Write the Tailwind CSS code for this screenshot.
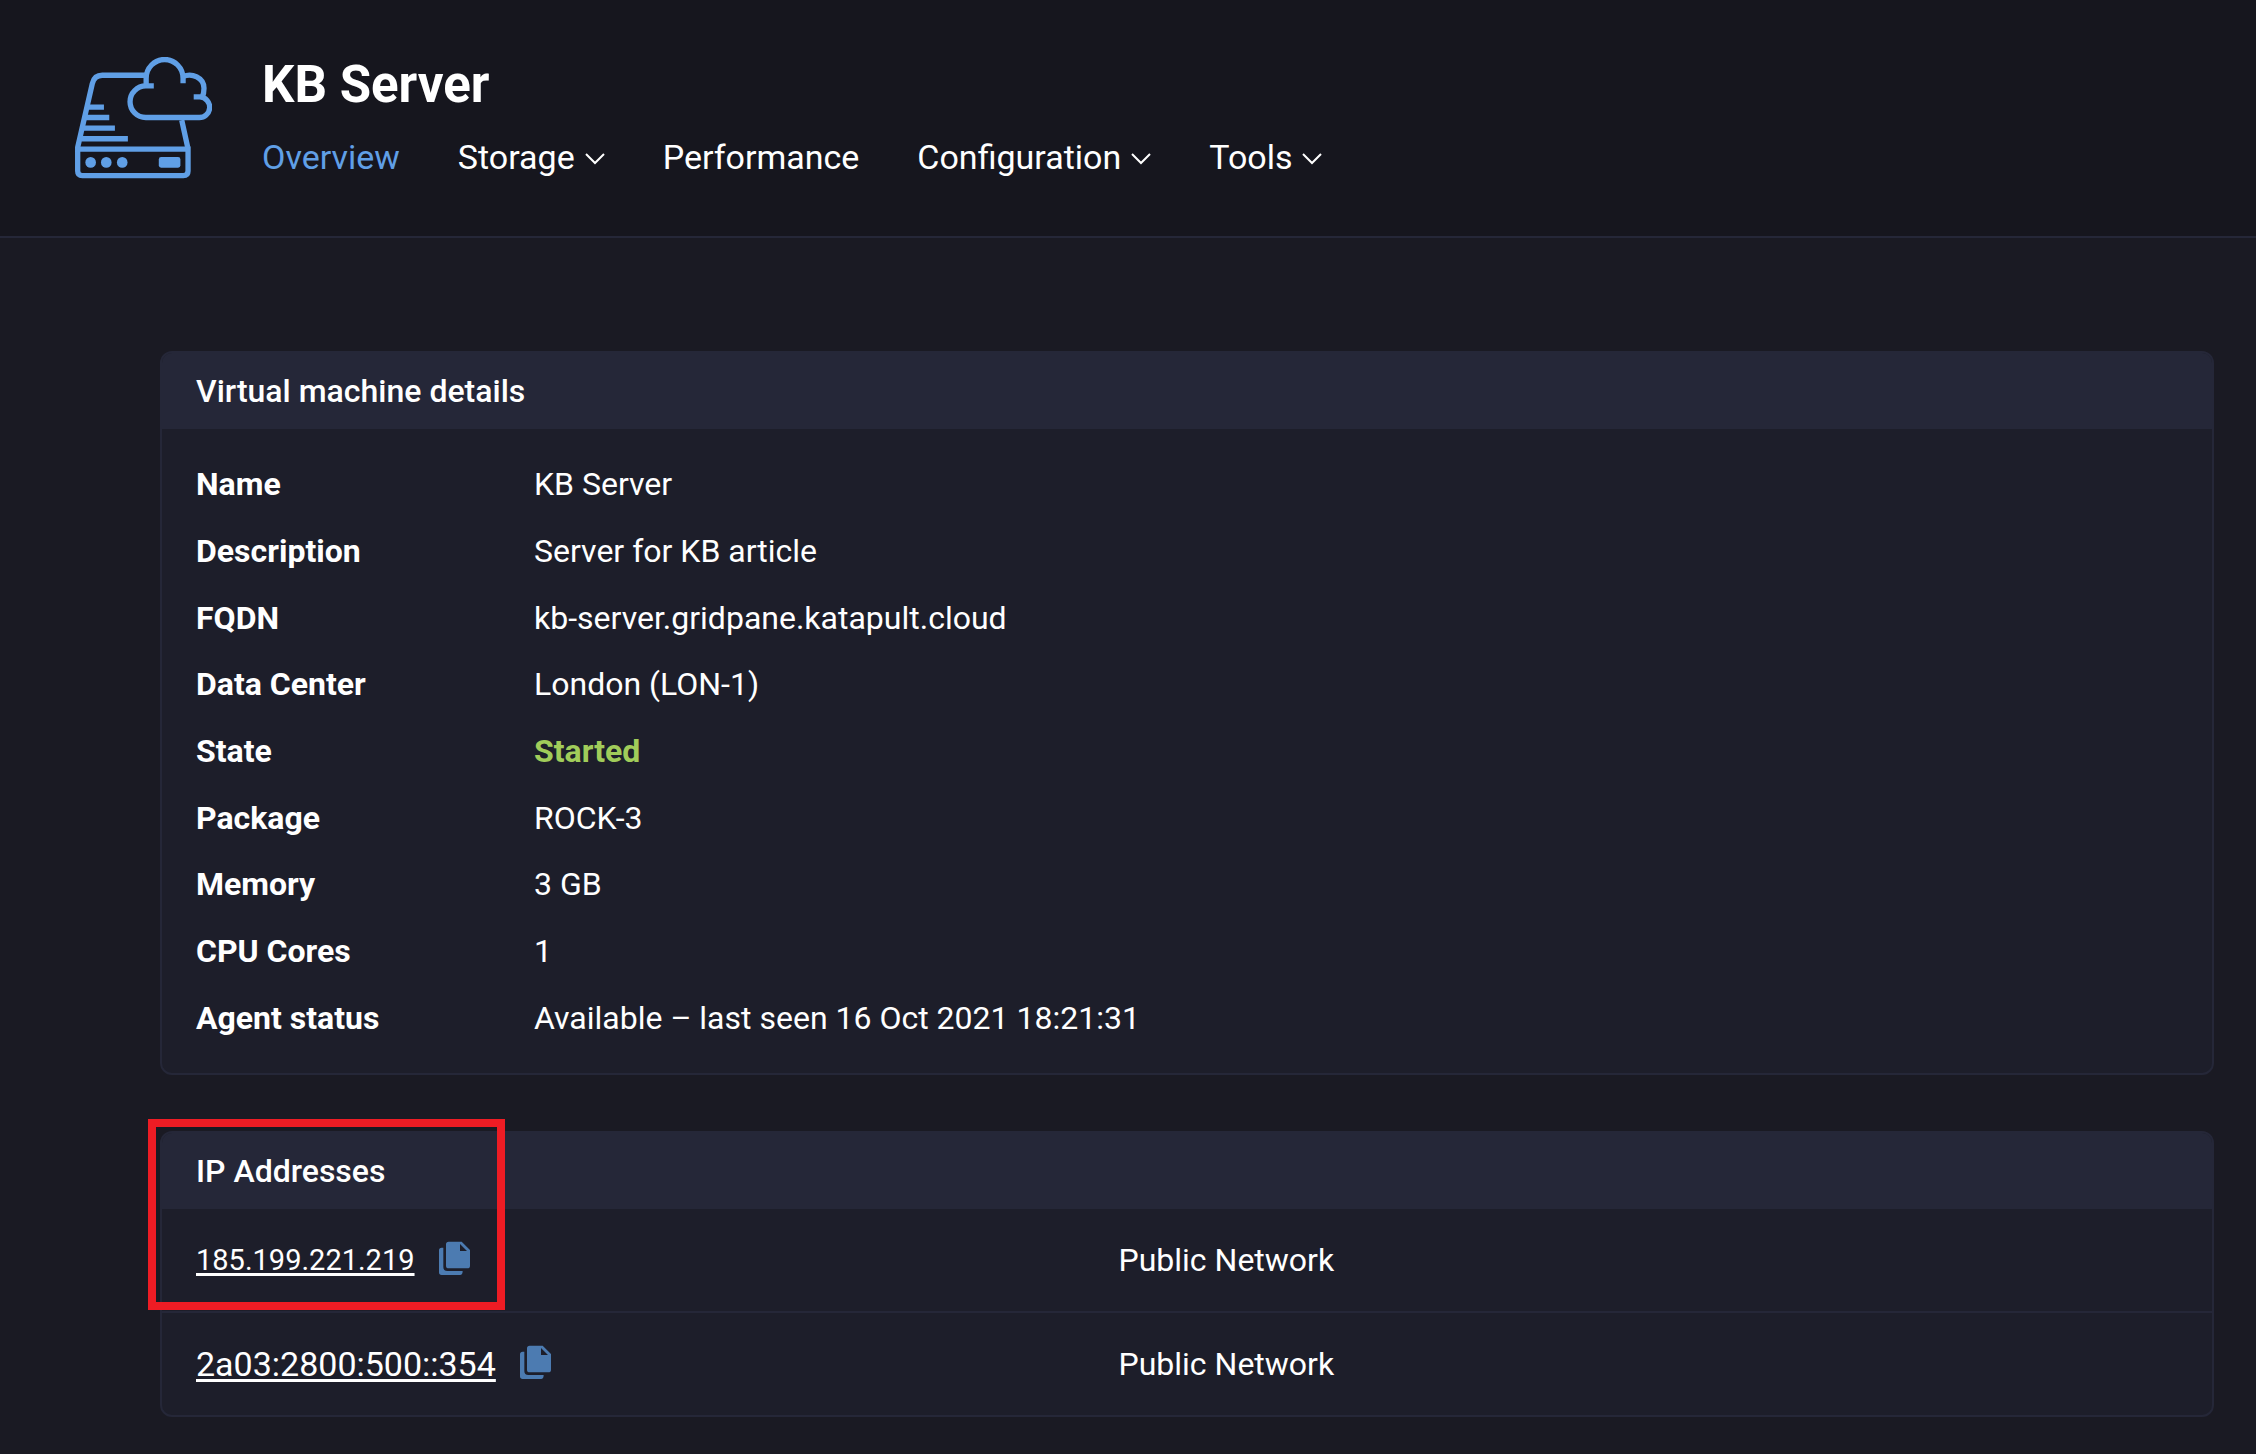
<!DOCTYPE html>
<html lang="en">
<head>
<meta charset="utf-8">
<meta name="viewport" content="width=device-width, initial-scale=1">
<title>KB Server</title>
<script src="https://cdn.jsdelivr.net/npm/@tailwindcss/browser@4"></script>
</head>
<body class="min-h-screen bg-[#1a1a23] font-['Roboto',sans-serif] text-[32px] leading-10 text-white">

<svg class="hidden" aria-hidden="true">
  <symbol id="chevron" viewBox="0 0 20 12"><path d="M1 1l9 9 9-9" fill="none" stroke="currentColor" stroke-width="2"/></symbol>
  <symbol id="copy" viewBox="0 0 93 102">
    <path fill="currentColor" d="M13 20H8Q0 20 0 28V94Q0 102 8 102H63Q71 102 71 90H25Q13 90 13 78Z"/>
    <path fill="currentColor" fill-rule="evenodd" d="M29 2H68L93 27V74Q93 82 85 82H29Q21 82 21 74V10Q21 2 29 2ZM63 9V30H84Z"/>
  </symbol>
</svg>

<header class="flex items-start gap-[50px] border-b-2 border-[#252738] bg-[#16161e] px-[75px] py-[57px]">
  <svg class="h-[122px] w-[137px] shrink-0 text-[#609fe6]" viewBox="45 50 412 367" fill="none" stroke="currentColor" stroke-width="16" aria-hidden="true">
    <path d="M260 105H127Q103 105 97 130L53 322M366 240L384 322"/>
    <path d="M53 327H385V393Q385 407 371 407H67Q53 407 53 393Z"/>
    <path d="M83 201H132M78 232H148M72 264H165M64 296H204"/>
    <path d="M282 137H258A47 47 0 0 0 258 232H417A31 31 0 0 0 421 170H402"/>
    <path d="M259 138V114A55 56 0 0 1 370 114V129M370 109C396 97 433 112 433 144Q433 160 428 170"/>
    <g fill="currentColor" stroke="none">
      <circle cx="92" cy="367" r="16"/><circle cx="139" cy="367" r="16"/><circle cx="187" cy="367" r="16"/>
      <rect x="297" y="351" width="65" height="32" rx="7"/>
    </g>
  </svg>
  <div class="flex flex-col gap-6">
    <h1 class="text-[51px] leading-14 font-bold">KB Server</h1>
    <nav class="flex flex-wrap gap-x-[58px] text-[34px]" aria-label="Server">
      <a href="#" class="text-[#609fe6]" aria-current="page">Overview</a>
      <button type="button" class="flex items-center gap-[10px]">Storage <svg class="mt-1 h-3 w-5" aria-hidden="true"><use href="#chevron"/></svg></button>
      <a href="#">Performance</a>
      <button type="button" class="flex items-center gap-[10px]">Configuration <svg class="mt-1 h-3 w-5" aria-hidden="true"><use href="#chevron"/></svg></button>
      <button type="button" class="flex items-center gap-[10px]">Tools <svg class="mt-1 h-3 w-5" aria-hidden="true"><use href="#chevron"/></svg></button>
    </nav>
  </div>
</header>

<main class="flex flex-col gap-14 pt-[113px] pr-[42px] pb-9 pl-40">
  <section class="overflow-hidden rounded-xl border-2 border-[#252738] bg-[#1d1e2a]">
    <h2 class="bg-[#252738] px-[34px] py-[18px] font-medium">Virtual machine details</h2>
    <dl class="my-[22px] grid min-h-[600px] auto-rows-fr grid-cols-[338px_1fr] items-center px-[34px]">
      <dt class="font-bold">Name</dt><dd>KB Server</dd>
      <dt class="font-bold">Description</dt><dd>Server for KB article</dd>
      <dt class="font-bold">FQDN</dt><dd>kb-server.gridpane.katapult.cloud</dd>
      <dt class="font-bold">Data Center</dt><dd>London (LON-1)</dd>
      <dt class="font-bold">State</dt><dd class="font-bold text-[#a1cc5a]">Started</dd>
      <dt class="font-bold">Package</dt><dd>ROCK-3</dd>
      <dt class="font-bold">Memory</dt><dd>3 GB</dd>
      <dt class="font-bold">CPU Cores</dt><dd>1</dd>
      <dt class="font-bold">Agent status</dt><dd>Available – last seen 16 Oct 2021 18:21:31</dd>
    </dl>
  </section>

  <div class="relative">
    <section class="overflow-hidden rounded-xl border-2 border-[#252738] bg-[#1d1e2a]">
      <h2 id="ip-heading" class="bg-[#252738] px-[34px] py-[18px] font-medium">IP Addresses</h2>
      <table class="w-full border-collapse" aria-labelledby="ip-heading">
        <tbody>
          <tr class="border-b-2 border-[#252738]">
            <td class="w-[45%] py-[31px] pl-[34px]">
              <div class="flex items-center gap-6">
                <a href="#" class="text-[29px] underline decoration-3 underline-offset-3">185.199.221.219</a>
                <button type="button" class="-mt-1 text-[#4c7bb1]" aria-label="Copy 185.199.221.219"><svg class="h-[34px] w-[31px]" aria-hidden="true"><use href="#copy"/></svg></button>
              </div>
            </td>
            <td class="py-[31px] pl-[34px]">Public Network</td>
          </tr>
          <tr>
            <td class="w-[45%] py-[31px] pl-[34px]">
              <div class="flex items-center gap-6">
                <a href="#" class="text-[34px] underline decoration-3 underline-offset-3">2a03:2800:500::354</a>
                <button type="button" class="-mt-1 text-[#4c7bb1]" aria-label="Copy 2a03:2800:500::354"><svg class="h-[34px] w-[31px]" aria-hidden="true"><use href="#copy"/></svg></button>
              </div>
            </td>
            <td class="py-[31px] pl-[34px]">Public Network</td>
          </tr>
        </tbody>
      </table>
    </section>
    <div class="pointer-events-none absolute -top-3 -left-3 h-[191px] w-[357px] border-8 border-[#ee1c24]"></div>
  </div>
</main>
</body>
</html>
